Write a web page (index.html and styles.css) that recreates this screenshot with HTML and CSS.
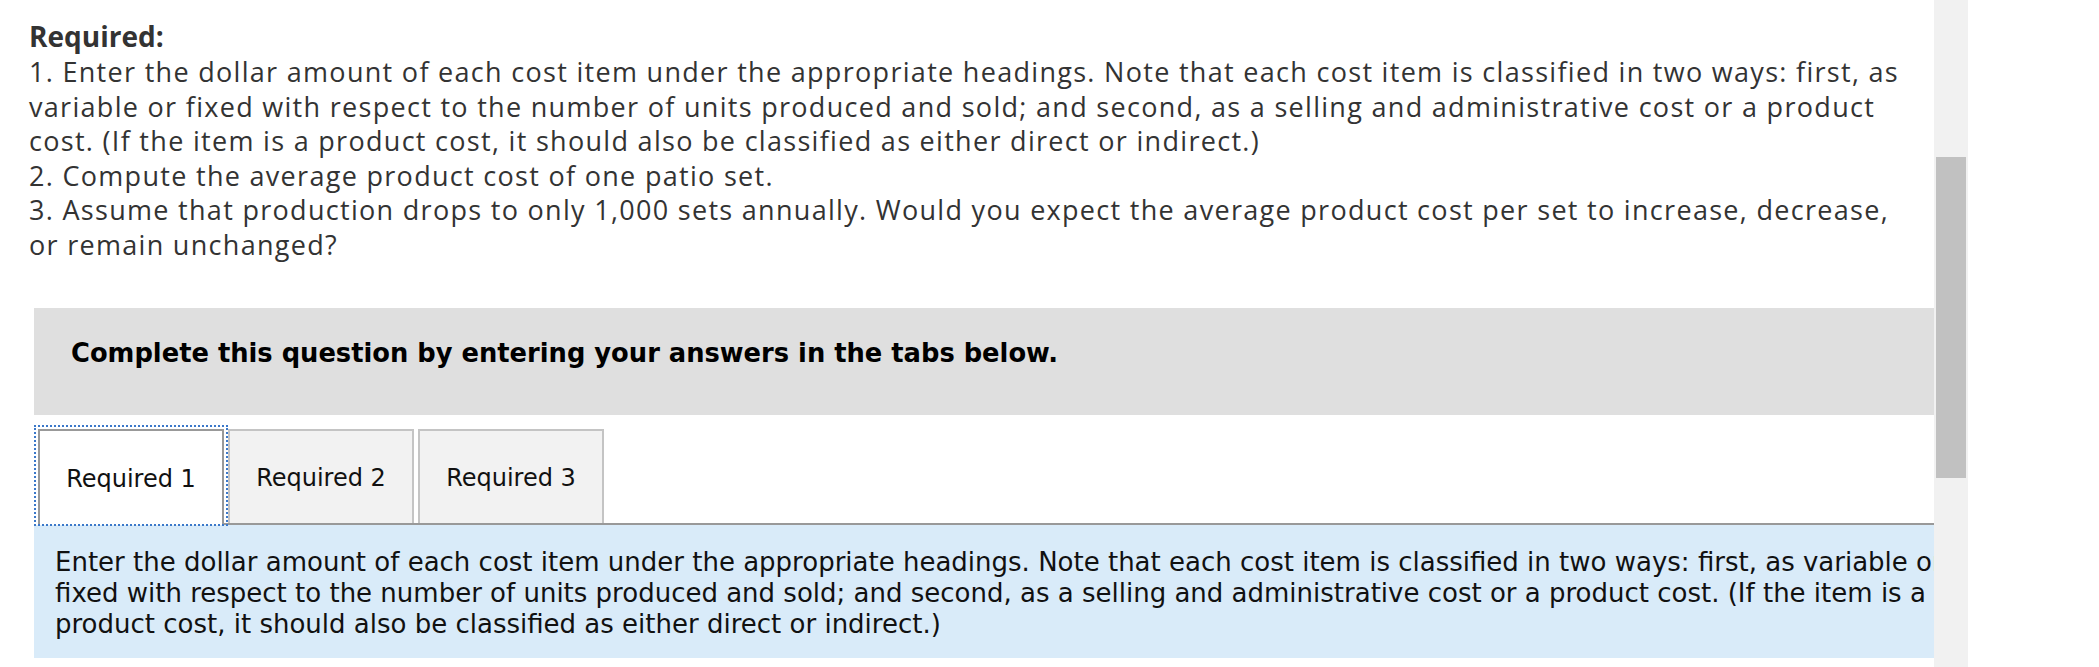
FILE: index.html
```html
<!DOCTYPE html>
<html>
<head>
<meta charset="utf-8">
<link rel="stylesheet" href="styles.css">
</head>
<body>
<div class="frame">
  <div class="viewport">
    <div class="content">
      <div class="required">
        <p class="req-title">Required:</p>
        <p class="req-item">1. Enter the dollar amount of each cost item under the appropriate headings. Note that each cost item is classified in two ways: first, as variable or fixed with respect to the number of units produced and sold; and second, as a selling and administrative cost or a product cost. (If the item is a product cost, it should also be classified as either direct or indirect.)</p>
        <p class="req-item">2. Compute the average product cost of one patio set.</p>
        <p class="req-item">3. Assume that production drops to only 1,000 sets annually. Would you expect the average product cost per set to increase, decrease, or remain unchanged?</p>
      </div>
      <div class="prompt">Complete this question by entering your answers in the tabs below.</div>
      <div class="tabs">
        <div class="tab active">Required 1</div>
        <div class="tab">Required 2</div>
        <div class="tab">Required 3</div>
      </div>
      <div class="panel">
        <p>Enter the dollar amount of each cost item under the appropriate headings. Note that each cost item is classified in two ways: first, as variable or fixed with respect to the number of units produced and sold; and second, as a selling and administrative cost or a product cost. (If the item is a product cost, it should also be classified as either direct or indirect.)</p>
      </div>
    </div>
  </div>
  <div class="scrollbar"><div class="thumb"></div></div>
</div>
</body>
</html>
```
FILE: styles.css
```css
html, body {
  margin: 0;
  padding: 0;
  background: #ffffff;
}

.frame {
  display: flex;
  height: 667px;
  overflow: hidden;
}

.viewport {
  width: 1934px;
  flex: none;
  overflow: hidden;
}

.content {
  width: 2040px;
}

.required {
  width: 1892px;
  padding: 17px 0 0 29px;
  font-family: "Open Sans", sans-serif;
  color: #333333;
}

.req-title {
  margin: 0;
  font-size: 28px;
  font-weight: 700;
  line-height: 38px;
}

.req-item {
  margin: 0;
  font-size: 27px;
  letter-spacing: 1.3px;
  line-height: 34.6px;
}

.prompt {
  margin: 45px 0 0 34px;
  padding: 30px 0 47px 37px;
  background: #dfdfdf;
  font-family: "DejaVu Sans", sans-serif;
  font-weight: 700;
  font-size: 25.75px;
  line-height: 30px;
  color: #000000;
}

.tabs {
  display: flex;
  gap: 4px;
  margin: 14px 0 0 38px;
  border-bottom: 2px solid #999999;
  align-items: flex-start;
}

.tab {
  box-sizing: border-box;
  width: 186px;
  height: 94px;
  padding-top: 2px;
  display: flex;
  align-items: center;
  justify-content: center;
  background: #f2f2f2;
  border: 2px solid #c4c4c4;
  border-bottom: none;
  font-family: "DejaVu Sans", sans-serif;
  font-size: 24px;
  color: #111111;
}

.tab.active {
  position: relative;
  height: 96px;
  margin-bottom: -2px;
  background: #ffffff;
  border-color: #999999;
}

.tab.active::after {
  content: "";
  position: absolute;
  left: -6px;
  right: -6px;
  top: -6px;
  bottom: -1px;
  border: 2px dotted #3b78c9;
}

.panel {
  margin-left: 34px;
  padding: 22px 0 18px 21px;
  background: #d9ebf9;
  font-family: "DejaVu Sans", sans-serif;
  font-size: 26px;
  line-height: 31px;
  color: #111111;
}

.panel p {
  margin: 0;
  width: 1935px;
}

.scrollbar {
  width: 34px;
  flex: none;
  background: #f1f1f1;
}

.thumb {
  margin: 157px 2px 0;
  height: 321px;
  background: #c1c1c1;
}
```
